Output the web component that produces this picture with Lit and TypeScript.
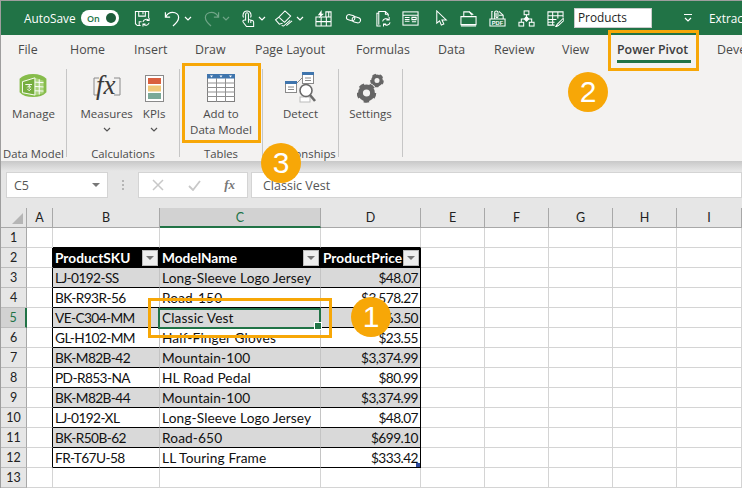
import { LitElement, html, css, svg } from "lit";
import { customElement } from "lit/decorators.js";

const chev = html`<svg class="chev" viewBox="0 0 8 5"><path d="M1 1l3 3 3-3" fill="none" stroke="currentColor" stroke-width="1.2"/></svg>`;
const ic = (body: unknown) => html`<svg class="qi" viewBox="0 0 18 18" fill="none" stroke="currentColor" stroke-width="1.1">${body}</svg>`;

const qat = html`
  <div class="slot">${ic(svg`<path d="M7 16.500H3.500l-2-2V1.500h14v7M5 1.500v5h7v-5M9.500 1.500v3M5.500 16.500v-4h2.500"/><path d="M9.500 12.500a3.500 3.500 0 0 1 6-1.500M16 13.500a3.500 3.500 0 0 1-6 1.500M16 8.500v2.700h-2.700M9.500 17.500v-2.700h2.700"/>`)}</div>
  <div class="slot">${ic(svg`<path d="M1.500 2.500v5h5M1.800 7.300C3.500 4 6 2.500 9 2.500c4 0 6.500 2.500 6.500 5.500 0 3-2.500 6-6 9" stroke-width="1.300"/>`)}</div>
  <div class="slot">${chev}</div>
  <div class="slot dim">${ic(svg`<path d="M16.500 2.500v5h-5M16.200 7.300C14.500 4 12 2.500 9 2.500 5 2.500 2.500 5 2.500 8c0 3 2.500 6 6 9" stroke-width="1.300"/>`)}</div>
  <div class="slot dim">${chev}</div>
  <div class="slot">${ic(svg`<path d="M7 11V4.500a1.500 1.500 0 0 1 3 0V10l4 1c1 .3 1.500 1 1.500 2v4.500H8L4.500 13c-1-1.500.5-3 2.500-2M12.500 10.800v3M10 10v3.500"/><path d="M4.800 8a5 5 0 0 1-.3-4c.6-2 2.500-3 4-3s3.400 1 4 3a5 5 0 0 1-.3 4"/>`)}</div>
  <div class="slot">${chev}</div>
  <div class="slot">${html`<svg class="qi wide" viewBox="0 0 22 18" fill="none" stroke="currentColor" stroke-width="1.100"><path d="M5 7.500L11.500 1l6 5.500-6.500 6.500M5 7.500l6 5.500M5 7.500l-3.500 3 4 4.500 3.500-1"/><path d="M8 16.500l2 .5 7-6M13 16.500l6-5"/></svg>`}</div>
  <div class="slot">${chev}</div>
  <div class="slot">${ic(svg`<path d="M1 7.500h16V17H1zM1 12.300h16M6.500 7.500V17M12 7.500V17M11.500 7V2H17v5.500M14.500 2v5.500"/><path d="M7 0L3 5.500h2.500L4 9l5.500-5H7z" fill="currentColor" stroke="none"/>`)}</div>
  <div class="slot">${ic(svg`<rect x="-4" y="-2.800" width="9" height="5.600" rx="2.800" transform="translate(5.500 8) rotate(15)"/><rect x="-5" y="-2.800" width="9" height="5.600" rx="2.800" transform="translate(12.500 10.500) rotate(15)"/>`)}</div>
  <div class="slot">${ic(svg`<path d="M6 17H2V3.500h2M4 15.500V1.500h7l3 3v2.500M11 1.500v3h3"/><path d="M8 12a3.800 3.800 0 0 1 6.500-1.500M16 13a3.800 3.800 0 0 1-6.500 1.800M15 7.500v3h-3M9 17.500v-2.700h2.700"/>`)}</div>
  <div class="slot">${ic(svg`<rect x="1" y="2" width="16" height="14"/><path d="M1 5.500h16M3 8h5M3 10h5M3 12h5M10.500 7.800h4.500v2.400h-4.500zM10.500 12.500h4.500"/>`)}</div>
  <div class="slot">${ic(svg`<path d="M4 1v13l3-2.500 1.800 4.500 2.700-1.200-2-4.300H14z"/>`)}</div>
  <div class="slot">${ic(svg`<path d="M1 7h16v8.500H1zM1 17h16M4 7V2h6l2.500 3.500"/><path d="M10 2l4 3" />`)}</div>
  <div class="slot">${ic(svg`<path d="M6 9V2.500c0-2 3.500-2 3.500 0V7c0 1.500-2 1.500-2 0V3M10.500 1.500l4.500 4v3.500M10.500 5.500H15M3 10V1.500h1M1 9.500h16V17H1z"/><text x="3" y="15.800" font-size="6" font-family="Liberation Sans" fill="currentColor" stroke="none" font-weight="700">PDF</text>`)}</div>
  <div class="slot">${ic(svg`<rect x="6.500" y="1" width="5" height="4"/><rect x="1" y="13" width="5" height="4"/><rect x="12" y="13" width="5" height="4"/><path d="M9 5v2M3.500 13V9.500h3.500M11 9.500h3.500V13"/><path d="M9 7l2.300 2.500L9 12 6.700 9.500z" fill="currentColor"/>`)}</div>
  <div class="slot">${ic(svg`<path d="M8 16H1V2h16v6M1 6h16M6 2v14M1 10h9M1 13h7M11.500 2v7"/><path d="M17 9l-6 6-2 3 3-1.500 6.500-6z"/>`)}</div>
`;

const tabs = ["File", "Home", "Insert", "Draw", "Page Layout", "Formulas", "Data", "Review", "View", "Power Pivot", "Developer"];

const gear = (cx: number, cy: number, r: number) => svg`
  <circle cx=${cx} cy=${cy} r=${r} fill="none" stroke="#666" stroke-width=${r * 0.8}/>
  <circle cx=${cx} cy=${cy} r=${r * 1.35} fill="none" stroke="#666" stroke-width=${r * 0.55} stroke-dasharray=${`${r * 0.85} ${r * 0.85}`}/>`;

const manage = html`<svg class="ri manage" viewBox="0 0 28 24">
  <path d="M0 5C3 1.500 8 0 14 0s11 1.500 14 5v14c-3 3.500-8 5-14 5S3 22.500 0 19z" fill="#86bc4b"/>
  <path d="M3 8l13-4v18L3 19.500z" fill="#76ae3f"/>
  <path d="M16 4l9 3v13l-9 2.500z" fill="#abd47e"/>
  <path d="M16 8.500l9 .5M16 13l9 .5M16 17.500l9 .3M20.500 5.500v16" stroke="#fff" stroke-width="1" fill="none"/>
  <path d="M3 8l13-4v18L3 19.500z" fill="none" stroke="#fff" stroke-width="1"/>
  <path d="M6 11h7" stroke="#fff" stroke-width="1"/>
  <path d="M8 14l2-2 2 2M10 12v3.500M8 15.500l2 2 2-2" stroke="#fff" stroke-width="1" fill="none"/>
</svg>`;
const fx = html`<svg class="ri fx" viewBox="0 0 28 26">
  <path d="M6 3H1v17h5M21 3h6v17h-6" fill="none" stroke="#8a8a8a" stroke-width="1"/>
  <text x="3" y="19" font-family="Liberation Serif" font-style="italic" font-size="27" fill="#3a3a3a">fx</text>
</svg>`;
const kpi = html`<svg class="ri kpi" viewBox="0 0 19 27">
  <rect x=".5" y=".5" width="18" height="26" fill="#fff" stroke="#8a8a8a"/>
  <rect x="3" y="3" width="13" height="6" fill="#d9603f"/><rect x="3" y="10.500" width="13" height="6" fill="#f0c878"/><rect x="3" y="18" width="13" height="6" fill="#7ba998"/>
</svg>`;
const addTable = html`<svg class="ri tbl" viewBox="0 0 28 28">
  <rect x=".5" y=".5" width="27" height="27" fill="#fff" stroke="#7f7f7f"/><rect x="0" y="0" width="28" height="4.500" fill="#3f75ad"/>
  <path d="M3 1.500h3L4.500 3.500zM12.500 1.500h3L14 3.500zM22 1.500h3L23.500 3.500z" fill="#fff"/>
  <path d="M0 9h28M0 13.500h28M0 18h28M0 22.500h28M9.500 4v24M18.500 4v24" stroke="#8f8f8f" stroke-width="1"/>
</svg>`;
const detect = html`<svg class="ri det" viewBox="0 0 31 32">
  <rect x="17.500" y=".5" width="11" height="11" fill="#fff" stroke="#8a8a8a"/><rect x="17" y="0" width="12" height="3" fill="#3f75ad"/><path d="M20 6h6M20 8.500h6" stroke="#8a8a8a"/>
  <rect x=".5" y="9.500" width="11" height="11" fill="#fff" stroke="#8a8a8a"/><rect x="0" y="9" width="12" height="3" fill="#3f75ad"/><path d="M3 15h6M3 17.500h6" stroke="#8a8a8a"/>
  <path d="M12 11l5-5" stroke="#8a8a8a"/>
  <rect x="15" y="25" width="10" height="5" fill="#fff" stroke="#bbb"/>
  <circle cx="21" cy="18.500" r="6" fill="#fff" stroke="#6a6a6a" stroke-width="1.600"/>
  <path d="M25 23l5 6" stroke="#6a6a6a" stroke-width="2.600"/>
</svg>`;
const settings = html`<svg class="ri set" viewBox="0 0 27 30">${gear(9.500, 20, 6)}${gear(20, 7.500, 4.200)}</svg>`;

type Row = [string, string, string];
const rows: Row[] = [
  ["LJ-0192-SS", "Long-Sleeve Logo Jersey", "$48.07"],
  ["BK-R93R-56", "Road-150", "$3,578.27"],
  ["VE-C304-MM", "Classic Vest", "$63.50"],
  ["GL-H102-MM", "Half-Finger Gloves", "$23.55"],
  ["BK-M82B-42", "Mountain-100", "$3,374.99"],
  ["PD-R853-NA", "HL Road Pedal", "$80.99"],
  ["BK-M82B-44", "Mountain-100", "$3,374.99"],
  ["LJ-0192-XL", "Long-Sleeve Logo Jersey", "$48.07"],
  ["BK-R50B-62", "Road-650", "$699.10"],
  ["FR-T67U-58", "LL Touring Frame", "$333.42"],
];

@customElement("app-root")
export class AppRoot extends LitElement {
  static styles = css`
    :host { display: block; position: relative; width: 742px; height: 488px; box-sizing: border-box; overflow: hidden;
      border-left: 1px solid #9e9e9e; border-top: 1px solid #9e9e9e; background: #fff;
      font-family: "Open Sans", "Noto Sans", sans-serif; color: #444; }
    .title { height: 34px; background: #217346; color: #fff; display: grid; align-items: center; padding-left: 23px;
      grid-template-columns: 57px 53px 30px 20px 19px 19px 17px 19px 16px 22px 19px 30px 30px 27px 31px 27px 29px 29px 29px 27px 91px 44px 1fr; font-size: 11.800px; overflow: hidden; }
    .slot { display: flex; align-items: center; }
    .dim { opacity: .35; }
    .qi { width: 17px; height: 17px; display: block; }
    .qi.wide { width: 21px; }
    .chev { width: 8px; height: 5px; display: block; }
    .toggle { width: 38px; height: 16px; border-radius: 8px; background: #fff; color: #217346; display: flex; align-items: center; justify-content: space-between; padding: 0 3px 0 6px; box-sizing: border-box; font-size: 9px; font-weight: 600; }
    .knob { width: 10px; height: 10px; border-radius: 50%; background: #1d5c3a; }
    .name { width: 78px; height: 20px; box-sizing: border-box; background: #fff; color: #222; font-size: 11.800px; line-height: 17px; padding-left: 3px; border: 1px solid #ccc; }
    .qmore { padding-left: 1px; flex-direction: column; gap: 2px; }
    .qmore i { display: block; width: 8px; height: 1px; background: #fff; }
    .extract { white-space: nowrap; }

    .tabs { height: 30px; background: #f3f2f1; display: grid; grid-template-columns: 52px 64px 61px 60px 101px 82px 56px 68px 55px 100px 1fr; padding-left: 17px; font-size: 12.400px; line-height: 30px; color: #4a4a4a; }
    .tab { white-space: nowrap; position: relative; }
    .tab.on { font-weight: 600; color: #3d3d3d; }
    .tab.on::after { content: ""; position: absolute; left: 0; width: 74px; bottom: 2px; height: 3px; background: #217346; }

    .ribbon { height: 96px; background: #f3f2f1; display: grid; grid-template-columns: 66px 113px 83px 76px 64px 1fr; box-sizing: border-box; padding: 4px 0 0; }
    .grp { border-right: 1px solid #c6c6c6; margin-bottom: 4px; display: grid; grid-template-rows: 1fr 10px; justify-items: center; font-size: 11.500px; text-align: center; min-width: 0; color: #4a4a4a; }
    .btns { display: flex; justify-content: center; align-items: flex-start; }
    .lab { white-space: nowrap; line-height: 14px; font-size: 11.300px; }
    .btn { display: flex; flex-direction: column; align-items: center; height: 72px; position: relative; line-height: 16px; white-space: nowrap; }
    .iconbox { height: 37px; display: flex; align-items: center; justify-content: center; }
    .btn .chev { margin-top: 5px; color: #555; }
    .calc { gap: 10px; }
    .ri { display: block; }
    .manage { width: 28px; height: 23px; margin-top: -4px; }
    .fx { width: 28px; height: 26px; margin-top: 1px; }
    .kpi { width: 19px; height: 27px; margin-top: 2px; }
    .tbl { width: 28px; height: 28px; }
    .det { width: 31px; height: 32px; }
    .set { width: 27px; height: 30px; }

    .fbar { height: 47px; box-sizing: border-box; background: linear-gradient(#c8c8c8 0, #e6e6e6 10px); padding: 11px 0 0 5px; display: flex; align-items: flex-start; }
    .fbox { height: 26px; box-sizing: border-box; background: #fff; border: 1px solid #d4d4d4; display: flex; align-items: center; font-size: 12.500px; color: #555; }
    .nm { width: 102px; padding: 0 7px; justify-content: space-between; }
    .tri { width: 0; height: 0; border-left: 4px solid transparent; border-right: 4px solid transparent; border-top: 4px solid #777; }
    .dots { width: 30px; display: flex; flex-direction: column; align-items: center; gap: 2px; padding-top: 8px; }
    .dots i { display: block; width: 2px; height: 2px; background: #b5b5b5; }
    .acts { width: 110px; padding: 0 12px 0 13px; justify-content: space-between; margin-right: 3px; }
    .acts svg { display: block; }
    .acts .fxs { font-family: "Liberation Serif", serif; font-style: italic; font-size: 13px; font-weight: 700; color: #777; }
    .ftext { flex: 1; padding-left: 11px; color: #555; font-size: 12.500px; }

    .sheet { display: grid; grid-template-columns: 26px 26px 107px 161px 100px repeat(4, 64px) 1fr; grid-auto-rows: 20px; font-family: Lato, "Liberation Sans", sans-serif; font-size: 13.700px; color: #111; }
    .c { box-sizing: border-box; border-right: 1px solid #d4d4d4; border-bottom: 1px solid #d4d4d4; line-height: 19px; white-space: nowrap; overflow: hidden; position: relative; }
    .h { background: #e6e6e6; border-color: #a8a8a8; text-align: center; font-size: 12.500px; color: #222; }
    .h.sel { background: #d2d2d2; color: #217346; border-bottom: 2px solid #217346; }
    .rh { border-right-color: #a8a8a8; border-bottom-color: #bdbdbd; background: #e6e6e6; text-align: center; font-size: 12.500px; color: #222; }
    .rh.sel { background: #d2d2d2; color: #217346; border-right: 2px solid #217346; }
    .corner { background: #e6e6e6; border-color: #a8a8a8; }
    .corner::after { content: ""; position: absolute; right: 3px; bottom: 3px; border-left: 11px solid transparent; border-bottom: 11px solid #b5b5b5; }
    .bl { border-right-color: #000; }
    .bb { border-bottom-color: #000; }
    .t { padding-left: 2px; border-bottom-color: #000; }
    .t.s { background: #d9d9d9; }
    .t.b { border-right-color: #c4c4c4; }
    .t.sku { letter-spacing: -.6px; }
    .t.mod { letter-spacing: .12px; }
    .t.p { text-align: right; padding: 0 2px 0 0; border-right-color: #000; letter-spacing: -.55px; }
    .th { background: #000; color: #fff; font-weight: 700; border-right-color: #000; border-bottom-color: #000; padding-left: 2px; }
    .fb { position: absolute; right: 1px; top: 2px; width: 16px; height: 16px; box-sizing: border-box; background: #eeeeee; border: 1px solid #bbb; }
    .fb::after { content: ""; position: absolute; left: 3px; top: 5px; border-left: 4px solid transparent; border-right: 4px solid transparent; border-top: 4px solid #777; }
    .corner-h { position: absolute; right: 0; bottom: 0; width: 4px; height: 4px; background: #2f4a9c; }

    .active { position: absolute; left: 157px; top: 307px; width: 163px; height: 21px; box-sizing: border-box; border: 2px solid #217346; }
    .handle { position: absolute; right: -3px; bottom: -3px; width: 6px; height: 6px; background: #217346; border: 1px solid #fff; box-sizing: content-box; }
    .mark { position: absolute; box-sizing: border-box; border: 3px solid #f7a707; }
    .m1 { left: 147px; top: 297px; width: 184px; height: 40px; }
    .m2 { left: 607px; top: 29px; width: 91px; height: 41px; }
    .m3 { left: 181px; top: 62px; width: 79px; height: 80px; }
    .badge { position: absolute; width: 40px; height: 40px; border-radius: 50%; background: #f7a707; color: #fff; font-family: "Liberation Sans", sans-serif; font-size: 30px; line-height: 40px; text-align: center; }
    .b1 { left: 350px; top: 296px; }
    .b2 { left: 567px; top: 71px; }
    .b3 { left: 260px; top: 142px; }
  `;

  private gridCells() {
    const letters = ["A", "B", "C", "D", "E", "F", "G", "H", "I"];
    const blank = (n: number) => Array.from({ length: n }, () => html`<div class="c"></div>`);
    const rh = (n: number) => html`<div class="c rh ${n === 5 ? "sel" : ""}">${n}</div>`;
    const out: unknown[] = [html`<div class="c corner"></div>`];
    letters.forEach((l) => out.push(html`<div class="c h ${l === "C" ? "sel" : ""}">${l}</div>`));
    out.push(rh(1), ...blank(1), html`<div class="c bb"></div>`, html`<div class="c bb"></div>`, html`<div class="c bb"></div>`, ...blank(5));
    out.push(rh(2), html`<div class="c bl"></div>`);
    ["ProductSKU", "ModelName", "ProductPrice"].forEach((t) => out.push(html`<div class="c th">${t}<span class="fb"></span></div>`));
    out.push(...blank(5));
    rows.forEach((r, i) => {
      const s = i % 2 === 0 ? "s" : "";
      out.push(rh(i + 3), html`<div class="c bl"></div>`,
        html`<div class="c t b sku ${s}">${r[0]}</div>`,
        html`<div class="c t b mod ${s}">${r[1]}</div>`,
        html`<div class="c t p ${s}">${r[2]}${i === 9 ? html`<span class="corner-h"></span>` : ""}</div>`,
        ...blank(5));
    });
    out.push(rh(13), ...blank(9));
    return out;
  }

  render() {
    return html`
      <div class="title">
        <div class="slot">AutoSave</div>
        <div class="slot"><div class="toggle">On<span class="knob"></span></div></div>
        ${qat}
        <div class="slot"><div class="name">Products</div></div>
        <div class="slot qmore"><i></i>${chev}</div>
        <div class="slot extract">Extract</div>
      </div>
      <div class="tabs">${tabs.map((t) => html`<div class="tab ${t === "Power Pivot" ? "on" : ""}">${t}</div>`)}</div>
      <div class="ribbon">
        <div class="grp"><div class="btns"><div class="btn"><div class="iconbox">${manage}</div>Manage</div></div><div class="lab">Data Model</div></div>
        <div class="grp"><div class="btns calc">
          <div class="btn"><div class="iconbox">${fx}</div>Measures${chev}</div>
          <div class="btn"><div class="iconbox">${kpi}</div>KPIs${chev}</div>
        </div><div class="lab">Calculations</div></div>
        <div class="grp"><div class="btns"><div class="btn"><div class="iconbox">${addTable}</div>Add to<br/>Data Model</div></div><div class="lab">Tables</div></div>
        <div class="grp"><div class="btns"><div class="btn"><div class="iconbox">${detect}</div>Detect</div></div><div class="lab">Relationships</div></div>
        <div class="grp"><div class="btns"><div class="btn"><div class="iconbox">${settings}</div>Settings</div></div><div class="lab"></div></div>
        <div></div>
      </div>
      <div class="fbar">
        <div class="fbox nm">C5<span class="tri"></span></div>
        <div class="dots"><i></i><i></i><i></i></div>
        <div class="fbox acts">
          <svg width="12" height="12" viewBox="0 0 12 12"><path d="M1 1l10 10M11 1L1 11" stroke="#c8c8c8" stroke-width="1.500"/></svg>
          <svg width="13" height="12" viewBox="0 0 13 12"><path d="M1 7l4 4 7-9" fill="none" stroke="#c8c8c8" stroke-width="1.800"/></svg>
          <span class="fxs">fx</span>
        </div>
        <div class="fbox ftext">Classic Vest</div>
      </div>
      <div class="sheet">${this.gridCells()}</div>
      <div class="active"><span class="handle"></span></div>
      <div class="mark m1"></div><div class="mark m2"></div><div class="mark m3"></div>
      <div class="badge b1">1</div><div class="badge b2">2</div><div class="badge b3">3</div>
    `;
  }
}
